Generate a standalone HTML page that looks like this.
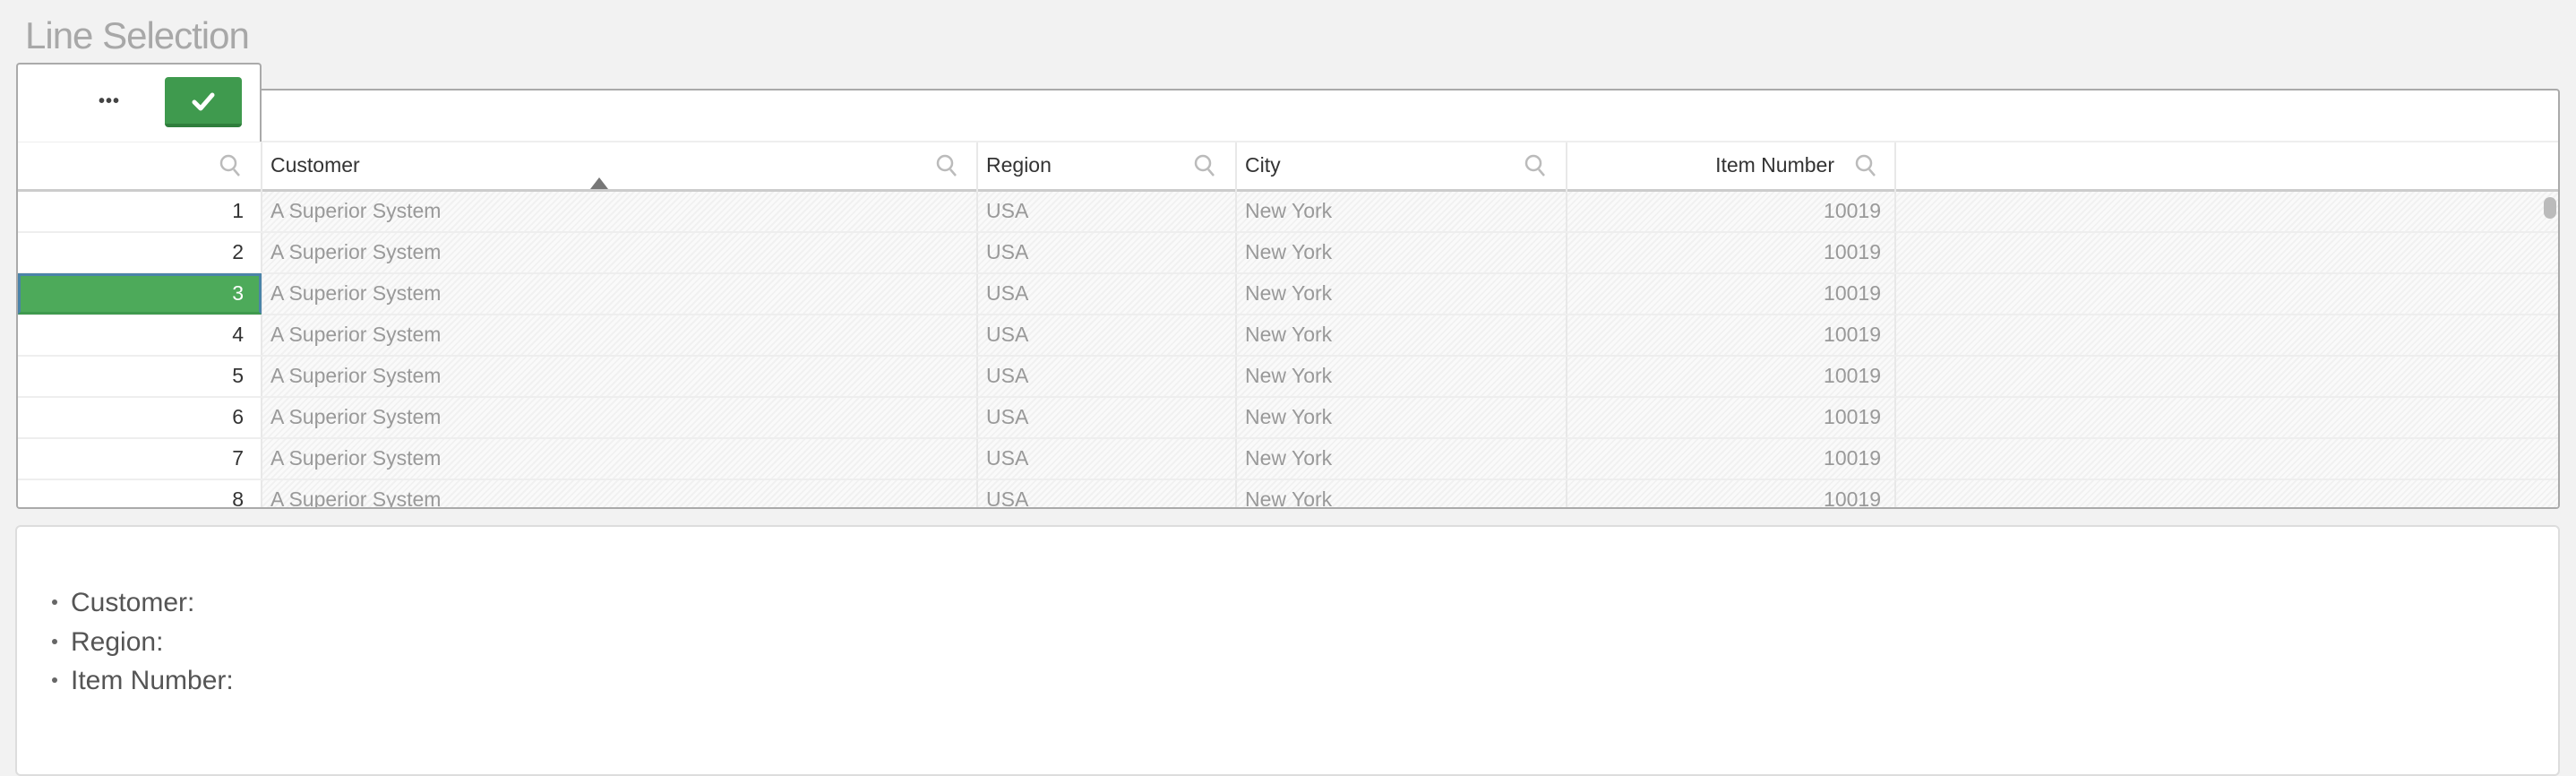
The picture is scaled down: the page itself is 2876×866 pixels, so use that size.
<!DOCTYPE html>
<html><head><meta charset="utf-8"><style>
*{margin:0;padding:0;box-sizing:border-box}
body{width:2876px;height:844px;background:#f2f2f2;position:relative;overflow:hidden;font-family:"Liberation Sans",sans-serif}
.abs{position:absolute}
.title{left:28px;top:16px;font-size:42px;color:#a8a8a8;letter-spacing:-1px}
.table{left:18px;top:99px;width:2840px;height:469px;background:#fff;border:2px solid #aaa;border-radius:4px;overflow:hidden}
.tab{left:18px;top:70px;width:274px;height:88px;background:#fff;border:2px solid #aaa;border-bottom:none;border-radius:4px 4px 0 0}
.btn{left:184px;top:86px;width:86px;height:56px;background:#3f9a4e;border-radius:4px;border-bottom:4px solid #2f7e3c}
.dots{left:110px;top:102px;font-size:20px;font-weight:bold;color:#444;letter-spacing:1px}
.hdr{top:56px;height:54px;font-size:23px;color:#333;line-height:54px}
.vl{top:58px;width:2px;height:420px;background:#e8e8e8}
.row{left:0;width:2840px;height:46px;border-bottom:2px solid #eee}
.striped{background:repeating-linear-gradient(135deg,#fafafa 0 3px,#f1f1f1 3px 5px)}
.cell{font-size:23px;color:#999;line-height:42px}
.num{font-size:23px;color:#333;line-height:42px;text-align:right;width:252px;left:0}
.panel{left:17px;top:586px;width:2841px;height:280px;background:#fff;border:2px solid #ddd;border-radius:6px}
.li{font-size:30px;color:#555;left:79px}
.bul{left:58px;width:6px;height:6px;border-radius:3px;background:#666}
</style></head><body>
<div class="abs title">Line Selection</div>
<div class="abs table">
 <div class="abs" style="left:0;top:56px;width:2840px;height:2px;background:#eee"></div>
 <div class="abs" style="left:0;top:110px;width:2840px;height:3px;background:#ccc"></div>
 <div class="abs striped" style="left:272px;top:113px;width:2568px;height:360px"></div>
</div>
<div class="abs tab"></div>
<div class="abs dots">•••</div>
<div class="abs btn"><svg width="86" height="52" viewBox="0 0 86 52"><path d="M33 28 L40 35 L53 20" stroke="#fff" stroke-width="5" fill="none" stroke-linecap="round" stroke-linejoin="round"/></svg></div>
<div class="abs panel"></div>
<div class="abs bul" style="top:669px"></div><div class="abs li" style="top:656px">Customer:</div>
<div class="abs bul" style="top:713px"></div><div class="abs li" style="top:700px">Region:</div>
<div class="abs bul" style="top:756px"></div><div class="abs li" style="top:743px">Item Number:</div>
<script>
var t=document.querySelector('.table');
var h='';
var cols=[273,1072,1361,1730,2097];
cols.forEach(function(x){h+='<div class="abs vl" style="left:'+(x-2)+'px"></div>';});
function mag(x){return '<svg class="abs" style="left:'+x+'px;top:70px" width="26" height="28" viewBox="0 0 26 28"><circle cx="11" cy="11" r="8" stroke="#bbb" stroke-width="2.5" fill="none"/><path d="M17 18 L23 25" stroke="#bbb" stroke-width="2.5"/></svg>';}
h+=mag(224)+mag(1024)+mag(1312)+mag(1681)+mag(2050);
h+='<div class="abs hdr" style="left:282px">Customer</div>';
h+='<div class="abs hdr" style="left:1081px">Region</div>';
h+='<div class="abs hdr" style="left:1370px">City</div>';
h+='<div class="abs hdr" style="left:1860px;width:168px;text-align:right">Item Number</div>';
h+='<svg class="abs" style="left:638px;top:97px" width="22" height="14"><path d="M11 0 L21 13 L1 13Z" fill="#777"/></svg>';
for(var i=0;i<8;i++){
 var y=113+i*46;
 h+='<div class="abs row" style="top:'+y+'px"></div>';
 if(i==2){h+='<div class="abs" style="left:0;top:'+(y-1)+'px;width:272px;height:46px;background:#4daa5a;border:3px solid #4b84a8;border-bottom:3px solid #3f9a4e"></div>';}
 else h+='<div class="abs" style="left:0;top:'+y+'px;width:271px;height:44px;background:#fff"></div>';
 h+='<div class="abs num" style="top:'+y+'px;'+(i==2?'color:#fff':'')+'">'+(i+1)+'</div>';
 h+='<div class="abs cell" style="left:282px;top:'+y+'px">A Superior System</div>';
 h+='<div class="abs cell" style="left:1081px;top:'+y+'px">USA</div>';
 h+='<div class="abs cell" style="left:1370px;top:'+y+'px">New York</div>';
 h+='<div class="abs cell" style="left:1900px;width:180px;text-align:right;top:'+y+'px">10019</div>';
}
h+='<div class="abs" style="left:2820px;top:119px;width:14px;height:24px;border-radius:7px;background:#bbb"></div>';
t.insertAdjacentHTML('beforeend',h);
</script>
</body></html>
